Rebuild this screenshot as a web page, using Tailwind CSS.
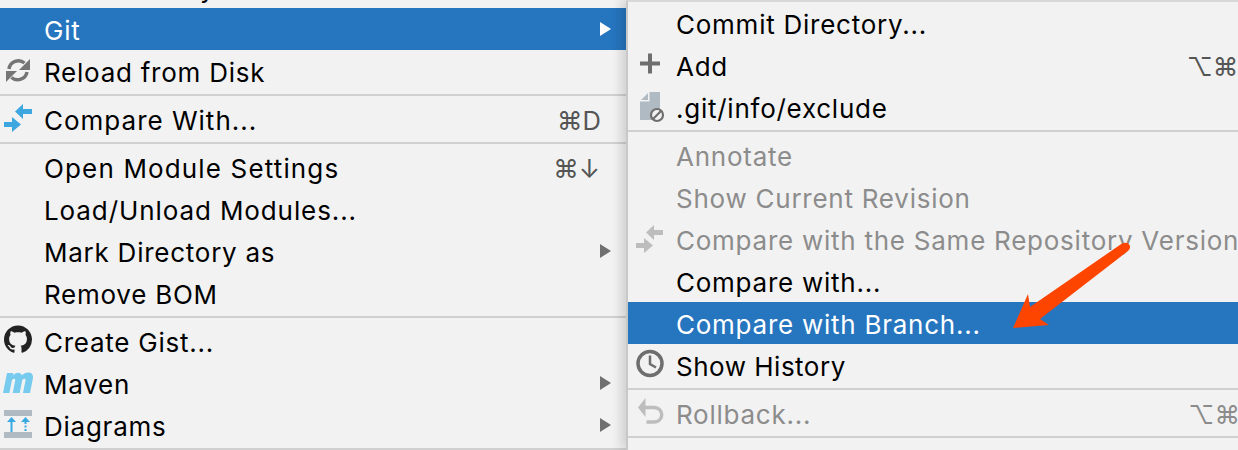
<!DOCTYPE html>
<html lang="en">
<head>
  <meta charset="UTF-8">
  <title>Git menu</title>
  <script src="https://cdn.jsdelivr.net/npm/@tailwindcss/browser@4"></script>
</head>
<body class="relative w-[1238px] h-[450px] overflow-hidden bg-[#f2f2f2] text-black font-['Inter','Liberation_Sans',sans-serif] text-[26px] tracking-[0.75px] leading-[42px]">
  <div class="flex h-[450px] overflow-hidden">

    <!-- Left menu -->
    <div class="w-[626px] shrink-0 -mt-[34px]">
      <div class="h-[42px] pt-[2px] pl-[44px]">Local History</div>
      <div class="h-[42px] pl-[44px] pr-[15px] flex items-center justify-between bg-[#2675bf] text-white">
        <span class="pt-[4px]">Git</span>
        <span class="w-0 h-0 border-y-[7px] border-y-transparent border-l-[11px] border-l-white"></span>
      </div>
      <div class="h-[42px] flex items-center">
        <svg class="w-[44px] h-[42px] shrink-0" viewBox="0 0 44 42" fill="none" stroke="#757575" stroke-width="3.500">
          <path d="M9 19a9.500 9.500 0 0 1 15.500-6" />
          <path d="M30 9v11h-11z" fill="#757575" stroke="none" />
          <path d="M27 22a9.500 9.500 0 0 1-15.500 5.500" />
          <path d="M6 21h11l-11 11z" fill="#757575" stroke="none" />
        </svg>
        <span class="pt-[4px]">Reload from Disk</span>
      </div>
      <div class="h-[6px] flex items-center"><div class="w-full h-[2px] bg-[#d0d0d0]"></div></div>
      <div class="h-[42px] flex items-center justify-between pr-[25px]">
        <div class="flex items-center">
          <svg class="w-[44px] h-[42px] shrink-0" viewBox="0 0 44 42" fill="#3ea7e0">
            <path d="M32 11h-9v-5l-8 7.500 8 7.500v-5h9z" />
            <path d="M4 24h8v-5l9 7.500-9 7.500v-5h-8z" />
          </svg>
          <span class="pt-[4px] tracking-[1px]">Compare With...</span>
        </div>
        <span class="pt-[4px] text-[#555] text-[25.5px] tracking-normal">⌘D</span>
      </div>
      <div class="h-[6px] flex items-center"><div class="w-full h-[2px] bg-[#d0d0d0]"></div></div>
      <div class="h-[42px] pl-[44px] pr-[26px] flex items-center justify-between">
        <span class="pt-[4px] tracking-[1.15px]">Open Module Settings</span>
        <span class="pt-[4px] text-[#555] text-[25.5px] tracking-normal">⌘↓</span>
      </div>
      <div class="h-[42px] pt-[2px] pl-[44px] tracking-[0.9px]">Load/Unload Modules...</div>
      <div class="h-[42px] pl-[44px] pr-[15px] flex items-center justify-between">
        <span class="pt-[4px]">Mark Directory as</span>
        <span class="w-0 h-0 border-y-[7px] border-y-transparent border-l-[11px] border-l-[#707070]"></span>
      </div>
      <div class="h-[42px] pt-[2px] pl-[44px]">Remove BOM</div>
      <div class="h-[6px] flex items-center"><div class="w-full h-[2px] bg-[#d0d0d0]"></div></div>
      <div class="h-[42px] flex items-center">
        <svg class="w-[44px] h-[42px] shrink-0 pl-[4px] pr-[12px] pb-[3px]" viewBox="0 0 16 16" fill="#222">
          <path d="M8 0C3.580 0 0 3.580 0 8c0 3.540 2.290 6.530 5.470 7.590.4.070.55-.17.55-.38 0-.19-.01-.82-.01-1.490-2.010.370-2.530-.490-2.690-.940-.09-.230-.48-.940-.82-1.130-.28-.150-.68-.520-.01-.530.63-.01 1.080.580 1.230.820.720 1.210 1.870.870 2.330.660.070-.520.280-.870.510-1.070-1.780-.200-3.640-.890-3.640-3.950 0-.870.310-1.590.820-2.150-.08-.200-.36-1.020.08-2.120 0 0 .67-.210 2.200.820.640-.180 1.320-.270 2-.270s1.360.090 2 .270c1.530-1.040 2.200-.820 2.200-.820.440 1.100.160 1.920.08 2.120.510.560.820 1.270.820 2.150 0 3.070-1.870 3.750-3.650 3.950.290.250.540.730.540 1.480 0 1.070-.010 1.930-.010 2.200 0 .210.150.460.550.380A8.010 8.010 0 0 0 16 8c0-4.420-3.580-8-8-8z" />
        </svg>
        <span class="pt-[4px]">Create Gist...</span>
      </div>
      <div class="h-[42px] pr-[15px] flex items-center justify-between">
        <div class="flex items-center">
          <svg class="w-[44px] h-[42px] shrink-0" viewBox="0 0 44 42" fill="#76cbee">
            <path d="M3 31l4-20h6.500l-.5 2.500c3-3.500 7.500-3.800 9-.2 3-3.800 11-4.500 11 1.700 0 1-.2 2-.4 3l-2.600 13h-7l2.500-12.500c.4-2-1.500-2.500-3.200-.5l-2.600 13h-7l2.500-12.500c.4-2-1.500-2.500-3.200-.5l-2.600 13z" />
          </svg>
          <span class="pt-[4px]">Maven</span>
        </div>
        <span class="w-0 h-0 border-y-[7px] border-y-transparent border-l-[11px] border-l-[#707070]"></span>
      </div>
      <div class="h-[42px] pr-[15px] flex items-center justify-between">
        <div class="flex items-center">
          <svg class="w-[44px] h-[42px] shrink-0" viewBox="0 0 44 42">
            <path d="M4 6h28v6h-28zM4 28h28v6h-28z" fill="#afbac2" />
            <path d="M11.500 13l-4.500 5h3.500v10h2v-10h3.500zM25.500 13l-4.500 5h3.500v2h2v-2h3.500zM24.500 21.500h2v2h-2zM24.500 25h2v2h-2z" fill="#39a9e2" />
          </svg>
          <span class="pt-[4px]">Diagrams</span>
        </div>
        <span class="w-0 h-0 border-y-[7px] border-y-transparent border-l-[11px] border-l-[#707070]"></span>
      </div>
      <div class="h-[6px] flex items-center"><div class="w-full h-[2px] bg-[#d0d0d0]"></div></div>
    </div>

    <!-- Git submenu -->
    <div class="w-[642px] shrink-0 h-[450px] border-l-2 border-l-[#c8c8c8] border-t-2 border-t-[#d8d8d8] shadow-[-5px_0_10px_rgba(0,0,0,0.14)] bg-[#f2f2f2] z-10">
      <div class="h-[42px] pt-[2px] pl-[48px]">Commit Directory...</div>
      <div class="h-[42px] flex items-center justify-between">
        <div class="flex items-center">
          <svg class="w-[48px] h-[42px] shrink-0" viewBox="0 0 48 42" fill="#6e6e6e">
            <path d="M12 17.500h8v-8h4v8h8v4h-8v8h-4v-8h-8z" />
          </svg>
          <span class="pt-[4px]">Add</span>
        </div>
        <span class="pt-[4px] text-[#555] text-[25.5px] tracking-normal pr-[12px]">⌥⌘A</span>
      </div>
      <div class="h-[42px] flex items-center">
        <svg class="w-[48px] h-[42px] shrink-0" viewBox="0 0 48 42">
          <path d="M13 14l7-7v7zM21.500 6h10.500v28h-20v-18.500h9.500z" fill="#afbac2" />
          <circle cx="29" cy="29" r="6" fill="#f2f2f2" stroke="#6e6e6e" stroke-width="2.200" />
          <path d="M25 33l8-8" stroke="#6e6e6e" stroke-width="2.200" />
        </svg>
        <span class="pt-[4px]">.git/info/exclude</span>
      </div>
      <div class="h-[6px] flex items-center"><div class="w-full h-[2px] bg-[#d0d0d0]"></div></div>
      <div class="h-[42px] pt-[2px] pl-[48px] text-[#8c8c8c]">Annotate</div>
      <div class="h-[42px] pt-[2px] pl-[48px] text-[#8c8c8c]">Show Current Revision</div>
      <div class="h-[42px] flex items-center text-[#8c8c8c] whitespace-nowrap">
        <svg class="w-[48px] h-[42px] shrink-0" viewBox="0 0 48 42" fill="#bdbdbd">
          <path d="M35 12h-9v-5l-8 7.500 8 7.500v-5h9z" />
          <path d="M8 25h8v-5l9 7.500-9 7.500v-5h-8z" />
        </svg>
        <span class="pt-[4px]">Compare with the Same Repository Version</span>
      </div>
      <div class="h-[42px] pt-[2px] pl-[48px]">Compare with...</div>
      <div class="h-[42px] pt-[2px] pl-[48px] bg-[#2675bf] text-white">Compare with Branch...</div>
      <div class="h-[42px] flex items-center">
        <svg class="w-[48px] h-[42px] shrink-0" viewBox="0 0 48 42" fill="none" stroke="#6e6e6e">
          <circle cx="22" cy="19.500" r="12" stroke-width="3.500" />
          <path d="M22 11.500v8.500l6 3.500" stroke-width="2.500" />
        </svg>
        <span class="pt-[4px] tracking-[0.5px]">Show History</span>
      </div>
      <div class="h-[6px] flex items-center"><div class="w-full h-[2px] bg-[#d0d0d0]"></div></div>
      <div class="h-[42px] flex items-center justify-between">
        <div class="flex items-center">
          <svg class="w-[48px] h-[42px] shrink-0" viewBox="0 0 48 42" fill="none" stroke="#bdbdbd" stroke-width="3.500">
            <path d="M16 15.500h10.500a7 7 0 0 1 0 14.500h-8" />
            <path d="M17.500 6l-7.500 9.500 7.500 9.500z" fill="#bdbdbd" stroke="none" />
          </svg>
          <span class="pt-[4px] text-[#8c8c8c]">Rollback...</span>
        </div>
        <span class="pt-[4px] text-[#8c8c8c] text-[25.5px] tracking-normal pr-[12px]">⌥⌘Z</span>
      </div>
      <div class="h-[6px] flex items-center"><div class="w-full h-[2px] bg-[#d0d0d0]"></div></div>
    </div>
  </div>

  <!-- Annotation arrow -->
  <svg class="absolute left-0 top-0 z-20 pointer-events-none" width="1238" height="450" viewBox="0 0 1238 450">
    <path d="M1122 243.500Q1128 241 1130 246Q1130.500 249 1128 251L1040 319L1049 325L1013 328L1028 294L1030 307Z" fill="#fe4500" />
  </svg>
</body>
</html>
